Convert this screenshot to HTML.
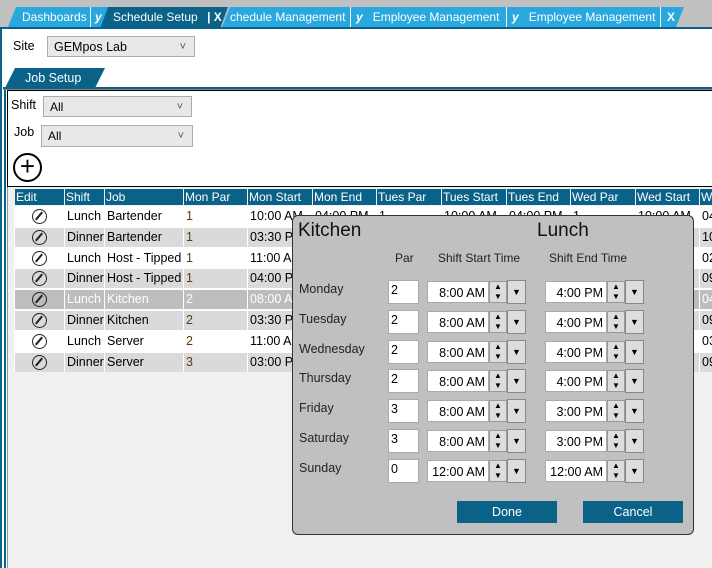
<!DOCTYPE html>
<html><head><style>
*{box-sizing:border-box;margin:0;padding:0}
body{width:712px;height:568px;position:relative;overflow:hidden;background:#fff;font-family:"Liberation Sans",sans-serif;font-size:12px;color:#000}
.a{position:absolute}
.tab{position:absolute;top:7px;height:20px;background:#29a8e0;color:#fff;font-size:12px;line-height:20px;white-space:nowrap;overflow:hidden}
.combo{position:absolute;background:#e8e8e8;border:1px solid #acacac;font-size:12px;padding-left:6px;line-height:20px}
.combo:after{content:"˅";position:absolute;right:8px;top:0;color:#555;font-size:11px}
.hd{position:absolute;top:189px;height:16px;background:#0b6289;color:#fff;font-size:12px;line-height:16px;padding-left:1px;white-space:nowrap;overflow:hidden}
.c{position:absolute;height:19px;line-height:19px;font-size:12.5px;white-space:nowrap;overflow:hidden;padding-left:2px}
.ed{position:absolute;width:15px;height:15px;border:1.6px solid #222;border-radius:50%}
.ed:after{content:"";position:absolute;left:5px;top:1px;width:2px;height:10px;background:#222;transform:rotate(40deg)}
.day{position:absolute;left:299px;font-size:12.5px;color:#222}
.par{position:absolute;left:388px;width:31px;height:24px;background:#fff;border:1px solid #aaa;padding:2px 0 0 2px;font-size:12.5px}
.tb{position:absolute;width:62px;height:22px;background:#fff;border:1px solid #aaa;text-align:right;padding-right:3px;line-height:22px;font-size:12.5px}
.sp{position:absolute;width:18px;height:22px;background:#ddd;border:1px solid #999;font-size:8px;line-height:10px;text-align:center}
.dd{position:absolute;width:19px;height:24px;background:#ddd;border:1px solid #888;text-align:center;font-size:9px;line-height:22px}
.btn{position:absolute;top:501px;width:100px;height:22px;background:#0b6289;color:#fff;text-align:center;line-height:22px;font-size:12.5px}
</style></head><body>
<div class="a" style="left:0;top:0;width:712px;height:27px;background:#c0c0c0"></div>
<div class="tab" style="left:8px;width:90px;padding-left:14px;clip-path:polygon(8px 0,100% 0,100% 100%,0 100%)">Dashboards</div>
<div class="tab" style="left:90px;width:20px;padding-left:4px;font-weight:bold;font-style:italic;border-left:1px solid #fff">y</div>
<div class="tab" style="left:100px;width:128px;height:22px;background:#0b6289;padding-left:13px;clip-path:polygon(8px 0,100% 0,calc(100% - 8px) 100%,0 100%)">Schedule Setup <span style="font-weight:bold;margin-left:6px">| X</span></div>
<div class="tab" style="left:222px;width:128px;padding-left:8px;clip-path:polygon(8px 0,100% 0,100% 100%,0 100%)">chedule Management</div>
<div class="tab" style="left:350px;width:158px;padding-left:5px;border-left:1px solid #fff"><b><i>y</i></b>&nbsp;&nbsp; Employee Management</div>
<div class="tab" style="left:506px;width:160px;padding-left:5px;border-left:1px solid #fff"><b><i>y</i></b>&nbsp;&nbsp; Employee Management</div>
<div class="tab" style="left:660px;width:24px;padding-left:6px;font-weight:bold;border-left:1px solid #fff;clip-path:polygon(0 0,100% 0,calc(100% - 8px) 100%,0 100%)">X</div>
<div class="a" style="left:0;top:27px;width:712px;height:2px;background:#0b6289"></div>
<div class="a" style="left:0;top:27px;width:2px;height:541px;background:#0b6289"></div>
<div class="a" style="left:13px;top:39px;font-size:12.5px">Site</div>
<div class="combo" style="left:47px;top:36px;width:148px;height:21px;font-size:12.5px">GEMpos Lab</div>
<div class="a" style="left:5px;top:68px;width:100px;height:20px;background:#0b6289;color:#fff;font-size:12.5px;line-height:20px;padding-left:20px;clip-path:polygon(10px 0,100% 0,calc(100% - 10px) 100%,0 100%)">Job Setup</div>
<div class="a" style="left:3px;top:87px;width:709px;height:2px;background:#0b6289"></div>
<div class="a" style="left:4px;top:89px;width:2px;height:479px;background:#0b6289"></div>
<div class="a" style="left:3px;top:89px;width:709px;height:1px;background:#888"></div>
<div class="a" style="left:7px;top:90px;width:706px;height:97px;border:1px solid #000;border-right:none"></div>
<div class="a" style="left:7px;top:187px;width:705px;height:381px;background:#f0f0f0;border-left:1px solid #7a9fb8"></div>
<div class="a" style="left:11px;top:98px;font-size:12.5px">Shift</div>
<div class="combo" style="left:43px;top:96px;width:149px;height:21px">All</div>
<div class="a" style="left:14px;top:125px;font-size:12.5px">Job</div>
<div class="combo" style="left:41px;top:125px;width:152px;height:22px">All</div>
<div class="a" style="left:13px;top:153px;width:29px;height:29px;border:2px solid #000;border-radius:50%;font-size:26px;line-height:22px;text-align:center">+</div>

<div class="a" style="left:14px;top:206px;width:698px;height:166px;background:#fff"></div>
<div class="hd" style="left:15px;width:49px">Edit</div>
<div class="hd" style="left:65px;width:39px">Shift</div>
<div class="hd" style="left:105px;width:78px">Job</div>
<div class="hd" style="left:184px;width:63px">Mon Par</div>
<div class="hd" style="left:248px;width:64px">Mon Start</div>
<div class="hd" style="left:313px;width:63px">Mon End</div>
<div class="hd" style="left:377px;width:64px">Tues Par</div>
<div class="hd" style="left:442px;width:64px">Tues Start</div>
<div class="hd" style="left:507px;width:63px">Tues End</div>
<div class="hd" style="left:571px;width:64px">Wed Par</div>
<div class="hd" style="left:636px;width:63px">Wed Start</div>
<div class="hd" style="left:700px;width:12px">W</div>

<div id="rows"></div>
<script>
var d=[["Lunch","Bartender","1","10:00 AM","04:00 PM","1","10:00 AM","04:00 PM","1","10:00 AM","04"],
["Dinner","Bartender","1","03:30 PM","","","","","","","10"],
["Lunch","Host - Tipped","1","11:00 AM","","","","","","","02"],
["Dinner","Host - Tipped","1","04:00 PM","","","","","","","09"],
["Lunch","Kitchen","2","08:00 AM","","","","","","","04"],
["Dinner","Kitchen","2","03:30 PM","","","","","","","09"],
["Lunch","Server","2","11:00 AM","","","","","","","03"],
["Dinner","Server","3","03:00 PM","","","","","","","09"]];
var xs=[[15,49],[65,39],[105,78],[184,63],[248,64],[313,63],[377,64],[442,64],[507,63],[571,64],[636,63],[700,12]];
var h="";
for(var i=0;i<8;i++){var y=207+i*20.8;var sel=i==4;var bg=sel?"#bdbdbd":(i%2?"#dadada":"transparent");var col=sel?"#fff":"#000";
for(var j=0;j<12;j++){var t=j==0?"":d[i][j-1];h+='<div class="c" style="left:'+xs[j][0]+'px;top:'+y+'px;width:'+xs[j][1]+'px;background:'+bg+';color:'+col+(j==3&&!sel?';color:#5a3a10':'')+'">'+t+'</div>';}
h+='<div class="ed" style="left:32px;top:'+(y+2)+'px"></div>';}
document.getElementById("rows").innerHTML=h;
</script>

<div class="a" style="left:292px;top:215px;width:402px;height:320px;background:#c0c0c0;border:1px solid #333;border-radius:6px"></div>
<div class="a" style="left:298px;top:220px;font-size:19px;color:#111">Kitchen</div>
<div class="a" style="left:537px;top:220px;font-size:19px;color:#111">Lunch</div>
<div class="a" style="left:395px;top:251px;color:#222">Par</div>
<div class="a" style="left:438px;top:251px;color:#222">Shift Start Time</div>
<div class="a" style="left:549px;top:251px;color:#222">Shift End Time</div>
<div id="dlg"></div>
<script>
var days=[["Monday","2","8:00 AM","4:00 PM"],["Tuesday","2","8:00 AM","4:00 PM"],["Wednesday","2","8:00 AM","4:00 PM"],["Thursday","2","8:00 AM","4:00 PM"],["Friday","3","8:00 AM","3:00 PM"],["Saturday","3","8:00 AM","3:00 PM"],["Sunday","0","12:00 AM","12:00 AM"]];
var h="";
for(var i=0;i<7;i++){var y=280+i*29.8;
h+='<div class="day" style="top:'+(y+2)+'px">'+days[i][0]+'</div>';
h+='<div class="par" style="top:'+y+'px">'+days[i][1]+'</div>';
[[427,days[i][2]],[545,days[i][3]]].forEach(function(p){
h+='<div class="tb" style="left:'+p[0]+'px;top:'+(y+1)+'px">'+p[1]+'</div>';
h+='<div class="sp" style="left:'+(p[0]+62)+'px;top:'+(y+1)+'px">▲<br>▼</div>';
h+='<div class="dd" style="left:'+(p[0]+80)+'px;top:'+y+'px">▼</div>';});}
document.getElementById("dlg").innerHTML=h;
</script>
<div class="btn" style="left:457px">Done</div>
<div class="btn" style="left:583px">Cancel</div>
</body></html>
